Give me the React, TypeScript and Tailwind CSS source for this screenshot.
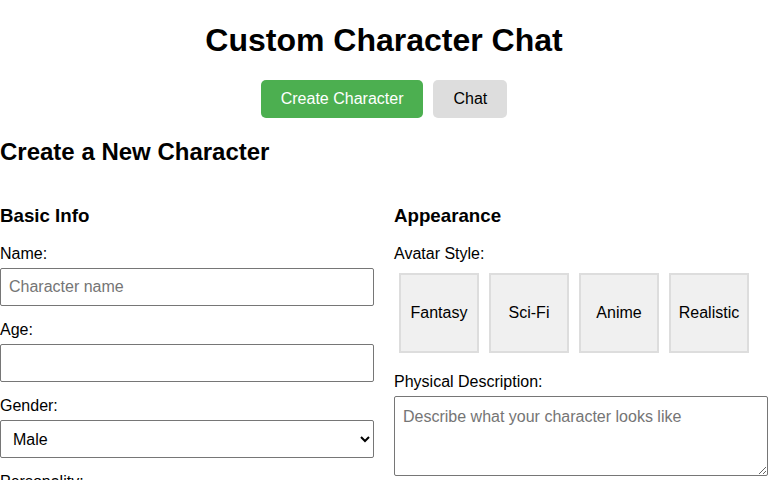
import { useState } from "react";

const avatarStyles = ["Fantasy", "Sci-Fi", "Anime", "Realistic"];

const fieldClass =
  "block w-full h-[38px] px-[8px] border border-[#767676] rounded-[2px] bg-white text-black text-base placeholder:text-[#757575] outline-none";

export default function App() {
  const [tab, setTab] = useState("create");
  const [avatar, setAvatar] = useState("");

  return (
    <div className="h-screen overflow-hidden bg-white text-black font-['Liberation_Sans',Arial,sans-serif] text-base">
      <h1 className="mt-[22px] mb-[21px] text-center text-[32px] font-bold leading-[37px]">
        Custom Character Chat
      </h1>

      <div className="flex justify-center gap-[10px] mb-[20px]">
        <button
          onClick={() => setTab("create")}
          className={`h-[38px] px-[20px] rounded-[5px] cursor-pointer ${
            tab === "create" ? "bg-[#4caf50] text-white" : "bg-[#dddddd] text-black"
          }`}
        >
          Create Character
        </button>
        <button
          onClick={() => setTab("chat")}
          className={`h-[38px] px-[20px] rounded-[5px] cursor-pointer ${
            tab === "chat" ? "bg-[#4caf50] text-white" : "bg-[#dddddd] text-black"
          }`}
        >
          Chat
        </button>
      </div>

      <h2 className="text-[24px] font-bold leading-[28px] mb-[20px]">Create a New Character</h2>

      <div className="grid grid-cols-2 gap-[20px]">
        {/* Left column */}
        <div>
          <h3 className="mt-[19px] mb-[19px] text-[18.72px] font-bold leading-[21px]">Basic Info</h3>

          <div className="mb-[15px]">
            <label className="block mb-[5px] leading-[18px]">Name:</label>
            <input type="text" placeholder="Character name" className={fieldClass} />
          </div>

          <div className="mb-[15px]">
            <label className="block mb-[5px] leading-[18px]">Age:</label>
            <input type="number" className={fieldClass} />
          </div>

          <div className="mb-[15px]">
            <label className="block mb-[5px] leading-[18px]">Gender:</label>
            <select className={`${fieldClass} h-[37px] appearance-auto`} defaultValue="male">
              <option value="male">Male</option>
              <option value="female">Female</option>
              <option value="other">Other</option>
            </select>
          </div>

          <div className="mb-[15px]">
            <label className="block mb-[5px] leading-[18px]">Personality:</label>
            <textarea
              placeholder="Describe your character's personality"
              className="block w-full h-[80px] p-[8px] border border-[#767676] rounded-[2px] placeholder:text-[#757575] outline-none"
            />
          </div>
        </div>

        {/* Right column */}
        <div>
          <h3 className="mt-[19px] mb-[19px] text-[18.72px] font-bold leading-[21px]">Appearance</h3>

          <div className="mb-[15px]">
            <label className="block mb-[5px] leading-[18px]">Avatar Style:</label>
            <div className="flex flex-wrap">
              {avatarStyles.map((s) => (
                <div
                  key={s}
                  onClick={() => setAvatar(s)}
                  className={`m-[5px] w-[80px] h-[80px] flex items-center justify-center border-2 bg-[#f0f0f0] cursor-pointer ${
                    avatar === s ? "border-[#4caf50]" : "border-[#dddddd]"
                  }`}
                >
                  {s}
                </div>
              ))}
            </div>
          </div>

          <div className="mb-[15px]">
            <label className="block mb-[5px] leading-[18px]">Physical Description:</label>
            <textarea
              placeholder="Describe what your character looks like"
              className="block w-full h-[80px] p-[8px] border border-[#767676] rounded-[2px] placeholder:text-[#757575] outline-none"
            />
          </div>
        </div>
      </div>
    </div>
  );
}
